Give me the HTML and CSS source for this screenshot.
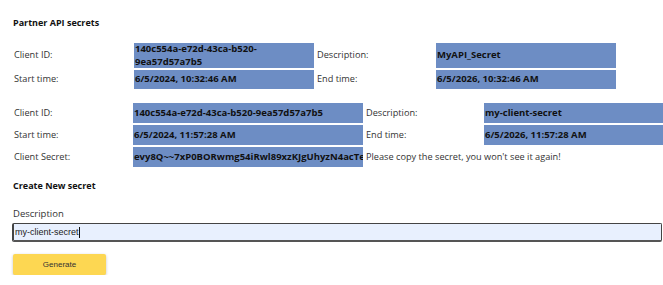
FILE: index.html
```html
<!DOCTYPE html>
<html lang="en">
<head>
    <meta charset="UTF-8">
    <meta name="viewport" content="width=device-width, initial-scale=1.0">
    <title>Partner API secrets</title>
    <link rel="stylesheet" href="styles.css">
</head>
<body>
    <div class="page">
        <h3>Partner API secrets</h3>

        <table class="secrets secrets-old">
            <colgroup>
                <col class="col-label">
                <col class="col-value">
                <col class="col-label2">
                <col class="col-value">
            </colgroup>
            <tr>
                <td class="label">Client ID:</td>
                <td class="value">140c554a-e72d-43ca-b520-9ea57d57a7b5</td>
                <td class="label">Description:</td>
                <td class="value">MyAPI_Secret</td>
            </tr>
            <tr>
                <td class="label">Start time:</td>
                <td class="value">6/5/2024, 10:32:46 AM</td>
                <td class="label">End time:</td>
                <td class="value">6/5/2026, 10:32:46 AM</td>
            </tr>
        </table>

        <table class="secrets secrets-new">
            <colgroup>
                <col class="col-label2">
                <col class="col-wide">
                <col class="col-label3">
                <col class="col-value">
            </colgroup>
            <tr>
                <td class="label">Client ID:</td>
                <td class="value">140c554a-e72d-43ca-b520-9ea57d57a7b5</td>
                <td class="label">Description:</td>
                <td class="value">my-client-secret</td>
            </tr>
            <tr>
                <td class="label">Start time:</td>
                <td class="value">6/5/2024, 11:57:28 AM</td>
                <td class="label">End time:</td>
                <td class="value">6/5/2026, 11:57:28 AM</td>
            </tr>
            <tr>
                <td class="label">Client Secret:</td>
                <td class="value secret">evy8Q~~7xP0BORwmg54iRwl89xzKJgUhyzN4acTe</td>
                <td class="label" colspan="2">Please copy the secret, you won't see it again!</td>
            </tr>
        </table>

        <h3 class="create-title">Create New secret</h3>

        <form class="new-secret" onsubmit="return false">
            <label for="desc">Description</label>
            <div class="field">
                <input type="text" id="desc" value="my-client-secret"><span class="caret"></span>
            </div>
            <button class="button" type="submit">Generate</button>
        </form>
    </div>
</body>
</html>
```

FILE: styles.css
```css
body {
    margin: 0;
    padding: 0;
    font-family: 'Open Sans', 'Noto Sans', sans-serif;
    font-size: 9.2px;
    color: #222;
    background: #fff;
    overflow: hidden;
}
.page {
    padding: 16px 0 0 13px;
}
h3 {
    font-size: 9px;
    font-weight: 700;
    color: #111;
    margin: 0;
    line-height: 14px;
}

/* secrets tables */
.secrets {
    table-layout: fixed;
    border-spacing: 2px;
    margin-left: -2px;
}
.secrets-old {
    margin-top: 11px;
    width: 607px;
}
.secrets-new {
    margin-top: 10px;
    width: 655px;
}
.col-label { width: 119px; }
.col-label2 { width: 118px; }
.col-label3 { width: 117px; }
.col-value { width: 180px; }
.col-wide { width: 230px; }

.secrets td {
    height: 19px;
    padding: 0 1px;
    line-height: 12.5px;
    vertical-align: middle;
}
.secrets-new td {
    height: 20px;
}
.label {
    color: #333;
    white-space: nowrap;
}
.value {
    background: #6d8dc4;
    font-weight: 700;
    font-size: 9.5px;
    color: #111;
}
.secret {
    white-space: nowrap;
    overflow: hidden;
}

/* create form */
.create-title {
    margin-top: 10px;
}
.new-secret {
    margin-top: 14px;
    display: flex;
    flex-direction: column;
    align-items: flex-start;
}
.new-secret label {
    color: #333;
    line-height: 14px;
    font-size: 9.5px;
}
.field {
    position: relative;
    width: 650px;
    margin-top: 2px;
    margin-left: -1px;
}
.field input {
    box-sizing: border-box;
    width: 100%;
    height: 19px;
    border: 1px solid #444;
    border-left-width: 2px;
    border-bottom: 2px solid #555;
    border-radius: 2px;
    background: #e8f0fe;
    font-family: 'Liberation Sans', Arial, sans-serif;
    font-size: 9px;
    color: #222;
    padding: 0 0 0 1px;
    outline: none;
}
.caret {
    position: absolute;
    left: 67px;
    top: 4px;
    width: 1px;
    height: 11px;
    background: #111;
}
.button {
    margin-top: 12px;
    width: 93px;
    height: 21px;
    background: #fdd752;
    border: none;
    border-radius: 2px;
    box-shadow: 0 1px 3px rgba(0, 0, 0, 0.25);
    font-family: 'Liberation Sans', Arial, sans-serif;
    font-size: 8px;
    color: #333;
    cursor: pointer;
}
```
